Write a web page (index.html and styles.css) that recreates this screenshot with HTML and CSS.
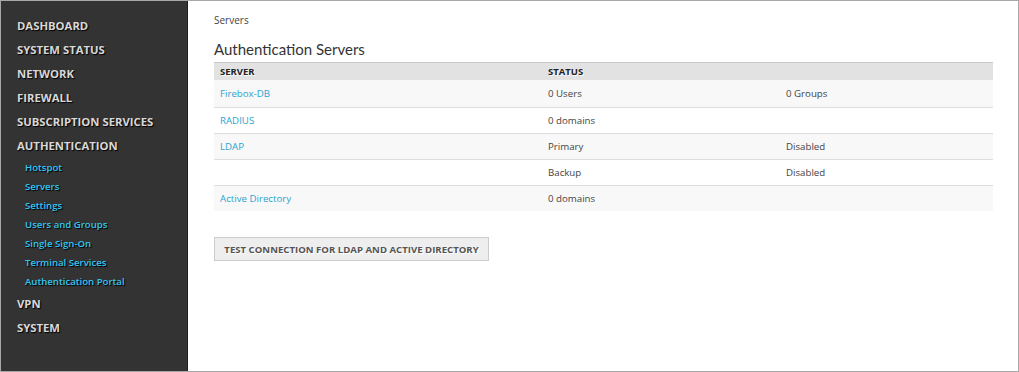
FILE: index.html
```html
<!DOCTYPE html>
<html>
<head>
    <title>Authentication Servers</title>
    <link rel="stylesheet" href="styles.css">
</head>
<body>
    <div class="frame">
        <div class="sidebar">
            <div class="nav-item">Dashboard</div>
            <div class="nav-item">System Status</div>
            <div class="nav-item">Network</div>
            <div class="nav-item">Firewall</div>
            <div class="nav-item">Subscription Services</div>
            <div class="nav-item">Authentication</div>
            <div class="sub-nav">
                <a href="#">Hotspot</a>
                <a href="#">Servers</a>
                <a href="#">Settings</a>
                <a href="#">Users and Groups</a>
                <a href="#">Single Sign-On</a>
                <a href="#">Terminal Services</a>
                <a href="#">Authentication Portal</a>
            </div>
            <div class="nav-item">VPN</div>
            <div class="nav-item">System</div>
        </div>

        <div class="main">
            <div class="breadcrumb">Servers</div>
            <h1>Authentication Servers</h1>

            <table class="servers">
                <thead>
                    <tr>
                        <th class="col-server">Server</th>
                        <th class="col-status">Status</th>
                        <th></th>
                    </tr>
                </thead>
                <tbody>
                    <tr>
                        <td><a href="#">Firebox-DB</a></td>
                        <td>0 Users</td>
                        <td>0 Groups</td>
                    </tr>
                    <tr>
                        <td><a href="#">RADIUS</a></td>
                        <td>0 domains</td>
                        <td></td>
                    </tr>
                    <tr>
                        <td><a href="#">LDAP</a></td>
                        <td>Primary</td>
                        <td>Disabled</td>
                    </tr>
                    <tr>
                        <td></td>
                        <td>Backup</td>
                        <td>Disabled</td>
                    </tr>
                    <tr>
                        <td><a href="#">Active Directory</a></td>
                        <td>0 domains</td>
                        <td></td>
                    </tr>
                </tbody>
            </table>

            <button class="test-btn">Test Connection for LDAP and Active Directory</button>
        </div>
    </div>
</body>
</html>
```

FILE: styles.css
```css
body { margin: 0; font-family: 'Open Sans', sans-serif; background: #fff; }
.frame {
    display: flex;
    width: 1017px;
    height: 370px;
    border: 1px solid #a8a8a8;
    overflow: hidden;
}

/* left navigation */
.sidebar {
    width: 186px;
    flex: none;
    background-color: #333;
    border-right: 1px solid #1e1e1e;
    padding-top: 13px;
    box-sizing: content-box;
}
.nav-item {
    padding-left: 16px;
    line-height: 24px;
    font-size: 11.3px;
    font-weight: 700;
    text-transform: uppercase;
    color: #d8d8d8;
    text-shadow: 1px 1px 1px #000;
}
.sub-nav { padding-left: 24px; margin-bottom: 1px; }
.sub-nav a {
    display: block;
    line-height: 19px;
    font-size: 9.6px;
    font-weight: 600;
    color: #33c5f3;
    text-decoration: none;
    text-shadow: 1px 1px 1px #000;
}

/* content */
.main { flex: 1; padding: 11px 25px 0 26px; }
.breadcrumb { font-size: 10px; color: #444; line-height: 16px; }
h1 {
    margin: 11px 0 3px;
    font-family: 'Lato', sans-serif;
    font-weight: 400;
    font-size: 15px;
    line-height: 20px;
    color: #333;
}
.servers { width: 100%; border-collapse: collapse; font-size: 9.7px; color: #444; }
.servers th {
    text-align: left;
    background: #e2e2e2;
    border-top: 1px solid #c8c8c8;
    height: 17px;
    padding: 0 6px;
    font-size: 9.5px;
    font-weight: 700;
    text-transform: uppercase;
    color: #222;
    text-shadow: 1px 1px 0 #fff;
}
.servers .col-server { width: 316px; }
.servers .col-status { width: 226px; }
.servers td { height: 25px; padding: 0 6px; border-top: 1px solid #ddd; }
.servers tbody tr:first-child td { border-top: none; height: 27px; }
.servers tbody tr:nth-child(odd) { background: #f8f8f8; }
.servers a { color: #2ba3cf; text-decoration: none; }

.test-btn {
    margin-top: 26px;
    width: 275px;
    height: 24px;
    background: #eee;
    border: 1px solid #ccc;
    font-family: 'Open Sans', sans-serif;
    font-size: 9.6px;
    font-weight: 700;
    text-transform: uppercase;
    color: #555;
    text-shadow: 1px 1px 0 #fff;
    cursor: pointer;
}
```
